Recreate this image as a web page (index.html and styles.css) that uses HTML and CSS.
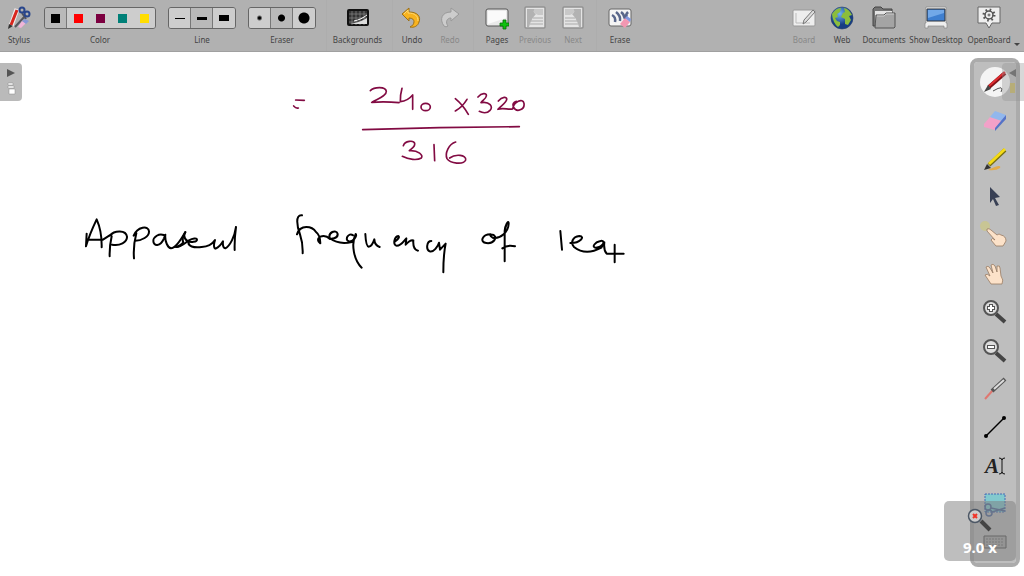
FILE: index.html
```html
<!DOCTYPE html>
<html lang="en">
<head>
<meta charset="utf-8">
<title>OpenBoard</title>
<link rel="stylesheet" href="styles.css">
</head>
<body>
<header class="toolbar">
  <button class="tool tool-stylus"><svg class="icon" viewBox="0 0 24 24"><path d="M4 20 10 3" stroke="#eee" stroke-width="5"/><path d="M4 19 10 4" stroke="#d8261e" stroke-width="3"/><path d="M1 23l1-5 4 2z" fill="#333"/><path d="M8 21 19 9M15 7l4 6" stroke="#55565e" stroke-width="2"/><g fill="none" stroke="#29468c" stroke-width="2"><circle cx="15" cy="4" r="2.5"/><circle cx="20" cy="8" r="2.5"/></g><path d="m11 21 4-6 4 2-5 5z" fill="#f0b4d8"/><path d="m15 15 3-2 4 2-3 3z" fill="#8799d6"/></svg><span>Stylus</span></button>
  <div class="tool tool-color" role="radiogroup" aria-labelledby="color-label">
    <div class="picker">
      <input type="radio" name="color" class="cell swatch black divided" aria-label="Black" checked>
      <input type="radio" name="color" class="cell swatch red" aria-label="Red">
      <input type="radio" name="color" class="cell swatch purple" aria-label="Purple">
      <input type="radio" name="color" class="cell swatch teal" aria-label="Teal">
      <input type="radio" name="color" class="cell swatch yellow" aria-label="Yellow">
    </div>
    <span id="color-label">Color</span>
  </div>
  <div class="tool tool-size" role="radiogroup" aria-labelledby="line-label">
    <div class="picker">
      <input type="radio" name="line" class="cell line-thin divided" aria-label="Thin line">
      <input type="radio" name="line" class="cell line-medium divided" aria-label="Medium line" checked>
      <input type="radio" name="line" class="cell line-thick" aria-label="Thick line">
    </div>
    <span id="line-label">Line</span>
  </div>
  <div class="tool tool-size" role="radiogroup" aria-labelledby="eraser-label">
    <div class="picker">
      <input type="radio" name="eraser" class="cell dot-small divided" aria-label="Small eraser">
      <input type="radio" name="eraser" class="cell dot-medium divided" aria-label="Medium eraser" checked>
      <input type="radio" name="eraser" class="cell dot-large" aria-label="Large eraser">
    </div>
    <span id="eraser-label">Eraser</span>
  </div>
  <div class="group">
    <button class="tool tool-backgrounds"><svg class="icon" viewBox="0 0 24 24"><rect x="2" y="4" width="20" height="15" rx="1" fill="#333" stroke="#111" stroke-width="2"/><path d="M3 8h18M3 12h18M3 16h18M6 5v14M10 5v14M14 5v14M18 5v14" stroke="#888" stroke-width=".7"/><path d="M4 18c7-1 12-3 17-6v6z" fill="#ddd"/><path d="M8 15c5-1 9-3 13-6" fill="none" stroke="#fff"/></svg><span>Backgrounds</span></button>
  </div>
  <div class="group">
    <button class="tool"><svg class="icon" viewBox="0 0 24 24"><path d="m2 8 7-6v4c9 0 12 5 10 10-1 4-5 6-9 5 5-2 6-9-1-9v3z" fill="#f8b31e" stroke="#9c7018" stroke-linejoin="round"/><path d="M4 8l4-4v3c7 0 10 3 10 8" fill="none" stroke="#ffd873"/></svg><span>Undo</span></button>
    <button class="tool" disabled><svg class="icon" viewBox="0 0 24 24"><path d="m21 8-8-6v4C4 6 1 13 6 20c1 1 3 1 4 0-3-4-1-8 3-8v3z" fill="#ccc" stroke="#999" stroke-linejoin="round"/></svg><span>Redo</span></button>
  </div>
  <div class="group group-pages">
    <button class="tool"><svg class="icon" viewBox="0 0 24 24"><rect x="1" y="3" width="22" height="17" rx="2" fill="#e9e9e9" stroke="#555"/><path d="M3 5h18v7L3 18z" fill="#fafafa"/><path d="M18 14h3v3h3v3h-3v3h-3v-3h-3v-3h3z" fill="#10c010" stroke="#067006" stroke-width=".8"/></svg><span>Pages</span></button>
    <button class="tool" disabled><svg class="icon" viewBox="0 0 24 24"><rect x="2" y="1" width="20" height="21" rx="1" fill="#e4e4e4" stroke="#929292" stroke-width="1.5"/><path d="M4 3h8q-3 3 1 5-5 5-7 13H4z" fill="#b2b2b2"/><path d="M12 3h8v6h-5l-2-1q-4-2-1-5z" fill="#c8c8c8"/><path d="M10 12h10M8 15h12M7 18h13" stroke="#aaa"/></svg><span>Previous</span></button>
    <button class="tool" disabled><svg class="icon" viewBox="0 0 24 24"><rect x="2" y="1" width="20" height="21" rx="1" fill="#e4e4e4" stroke="#929292" stroke-width="1.5"/><path d="M20 3h-8q3 3-1 5 5 5 7 13h2z" fill="#b2b2b2"/><path d="M12 3H4v6h5l2-1q4-2 1-5z" fill="#c8c8c8"/><path d="M14 12H4M16 15H4M17 18H4" stroke="#aaa"/></svg><span>Next</span></button>
  </div>
  <div class="group">
    <button class="tool tool-erase"><svg class="icon" viewBox="0 0 24 24"><rect x="1" y="3" width="22" height="17" rx="2" fill="#f4f4f4" stroke="#666"/><path d="m4 9q4 2 3 7M8 6q5 4 4 9M13 6q3 2 4 7M20 6q-3 3-1 5" fill="none" stroke="#59668a" stroke-width="2.5"/><path d="m12 18 5-6 5 4-5 6z" fill="#f297b2"/><path d="m17 12 2-2 4 3-1 3z" fill="#8198df"/></svg><span>Erase</span></button>
  </div>
  <nav class="modes" aria-label="Modes">
    <button class="tool" disabled><svg class="icon" viewBox="0 0 24 24"><rect x="1" y="4" width="22" height="16" rx="1" fill="#eee" stroke="#999"/><path d="M4 7v10h14" fill="none" stroke="#bbb"/><path d="m11 18 1-4 9-10 2 2-9 10z" fill="#ddd" stroke="#777"/></svg><span>Board</span></button>
    <button class="tool"><svg class="icon" viewBox="0 0 24 24"><defs><radialGradient id="sea" cx=".4" cy=".3"><stop stop-color="#70b5f5"/><stop offset="1" stop-color="#173d83"/></radialGradient></defs><circle cx="12" cy="12" r="11" fill="url(#sea)" stroke="#253e68" stroke-width=".6"/><path d="M2 8q4-6 9-6l-1 4-3 2 1 3-3 1 2 3 3 1v3l-2 2q-5-4-6-13zm12-6q5 1 8 7l-3 1 2 4-3 5-3-1v-5l-4-2 2-4 2-1z" fill="#8bbd3c"/></svg><span>Web</span></button>
    <button class="tool tool-documents"><svg class="icon" viewBox="0 0 24 24"><path d="M1 20V3l2-2h6l2 2h9v17z" fill="#747474" stroke="#444"/><path d="M3 5h17v13H3z" fill="#e4e4e4"/><path d="M3 22 4 9h8l2-2h9v14l-1 1z" fill="#a4a4a4" stroke="#555"/><path d="M5 10h7l2-2h8" stroke="#ccc" fill="none"/></svg><span>Documents</span></button>
    <button class="tool tool-desktop"><svg class="icon" viewBox="0 0 24 24"><path d="M2 1h20v16h1v5h-3v-2H4v2H1v-5h1z" fill="#eee" stroke="#888" stroke-width=".7"/><path d="M3 3h18v12H3z" fill="#3f7fd0" stroke="#30343a"/><path d="M4 4h16v3L4 12z" fill="#72a8e8"/></svg><span>Show Desktop</span></button>
    <button class="tool tool-openboard"><svg class="icon" viewBox="0 0 24 24"><path d="M1 1h22v16h-8l-3 5-3-5H1z" fill="#eee" stroke="#666"/><g fill="none" stroke="#555"><circle cx="12" cy="9" r="5" stroke-width="3" stroke-dasharray="1.5 2.427"/><circle cx="12" cy="9" r="4" stroke-width="1.5"/><circle cx="12" cy="9" r="1"/></g></svg><span>OpenBoard</span></button>
    <button class="more" aria-label="More"><svg viewBox="0 0 8 5"><path d="M1 1h6L4 4z" fill="#444"/></svg></button>
  </nav>
</header>
<main class="board">
  <svg class="ink" viewBox="0 52 1024 524" preserveAspectRatio="xMinYMin meet" role="img" aria-label="= 240 × 320 / 316. Apparent frequency of lea">
    <g class="ink-red" transform="translate(280 70) scale(.33333)">
      <path d="M47 90l26 1M41 108q7 8 14 6"/>
      <path d="M271 62C283 50 317 49 319 64 320 78 291 87 275 97q40-3 82 1M366 55q-6 22-5 40 22-2 37-20v43"/>
      <ellipse cx="437" cy="111" rx="14" ry="11"/>
      <path d="M526 86q23 19 39 47M561 88q-14 23-35 35"/>
      <path d="M594 81c11-13 27-13 25-3-1 8-12 14-16 20 26-5 38 13 27 23-9 10-23 8-32 3M655 93c11-14 27-14 25-4-2 11-19 19-26 29 15-6 31 2 44-1 3-22 31-34 34-17 3 20-23 28-31 12-5-10 0-16 8-18"/>
      <path d="M248 179l230-6 240-3"/>
      <path d="M370 227c5-15 31-17 34-7 2 11-11 17-16 22 27-2 43 14 36 22-13 8-37 5-57-5M462 224l2 48M527 216c-21 6-33 34-26 50 9 15 50 19 56 4 3-16-31-19-48-6"/>
    </g>
    <g class="ink-black" transform="translate(70 200) scale(.33333)">
      <path d="M50 101l-2 38C56 111 70 79 80 58q16 36 15 84M50 119h49l28-18M125 109q-7 31-6 60M119 107c15-17 49-17 52 3 1 17-22 29-45 24"/>
      <path d="M199 100q-10 38-7 75M191 107c11-27 45-32 46-13 1 16-22 28-41 28M281 105c-14-6-31 6-31 18 0 16 21 18 32-8l4-11c-2 21 8 40 17 41 14 0 30-26 43-49-9 16 1 24 8 29M320 141c14 0 27-14 37-20 10-6 24-8 24-2 0 7-19 8-25 6-4 14 15 19 39 16 19-1 31-7 40-21q-7 23 2 26 13-6 22-22-2 19 7 21c14-7 28-35 32-64q-5 35-4 69"/>
      <path d="M346 97q-12 20-6 30-8 12-26 14"/>
    </g>
    <g class="ink-black" transform="translate(280 200) scale(.33333)">
      <path d="M66 46C45 43 51 80 60 103q9 26 8 57M51 103C61 72 96 78 108 96q13 10 13 34-14-10 0-20 16-6 29 7c-8-20 19-31 23-15 1 15-21 15-23 13q25 20 66 11M219 106c-13-11-27 15-12 18 13 2 25-16 20-22-15 30-5 79 18 101M256 102q2 37 10 38 10-1 17-22 1 18 16 23"/>
      <path d="M346 124q15-12 9-16c-13 2-17 28-5 29 14 0 22-15 29-22l-2 19q14-16 23-13-2 28 14 31M454 123c-14 0-17 26-5 31 12 4 25-15 28-26l3 21 17-18q-7 33-7 86"/>
    </g>
    <g class="ink-black" transform="translate(460 200) scale(.33333)">
      <path d="M92 103c-26 0-34 24-13 26 21 3 34-15 22-24-12-4-14 1-3 8 22 5 47-17 48-42 0-16-12 9-12 21v92M127 145q16-12 38-6"/>
      <path d="M301 93l5 56M331 129c29 1 46-20 27-21-21 2-27 21-16 33 30 24 60 14 82 2 10-15 8-24-5-19-13 3-25 16-13 19 14 1 21-7 27-16-2 17 1 27 7 34h51M464 134v53"/>
    </g>
  </svg>
  <button class="tab tab-left" aria-label="Show pages"><svg viewBox="0 0 22 38"><path d="M7 6l8 4-8 4z" fill="#555"/><path d="M8 20h5v2H8zM8 23h6v2H8zM9 26h6v5H9z" fill="#fff" stroke="#888" stroke-width=".5"/></svg></button>
  <aside class="palette" aria-label="Tools">
    <button aria-label="Pen" class="active"><svg viewBox="0 0 30 30"><path d="M13 24q12-7 8 1" fill="none" stroke="#555"/><path d="m9 20 16-14" stroke="#801016" stroke-width="4"/><path d="m9 19 16-14" stroke="#e02c30" stroke-width="2"/><path d="M4 25l4-7 3 4z" fill="#444"/></svg></button>
    <button aria-label="Eraser"><svg viewBox="0 0 30 30"><path d="m4 18 6-7 12 4-7 9-11-3z" fill="#f2a1c8"/><path d="m10 11 5-6 11 4-4 6z" fill="#91b7ed"/><path d="m26 9-11 13v3l11-12z" fill="#5573c7"/></svg></button>
    <button aria-label="Marker"><svg viewBox="0 0 30 30"><path d="M8 26q14-7 12-2-4 3-12 2" fill="#e3ab4b"/><path d="m9 21 16-15" stroke="#756d13" stroke-width="4"/><path d="m9 20 16-15" stroke="#f5db16" stroke-width="3"/><path d="m4 26 3-6 4 4z" fill="#333"/></svg></button>
    <button aria-label="Select"><svg viewBox="0 0 30 30"><path d="m10 5 10 10-5 1 4 7-3 1-3-7-3 4z" fill="#384054"/></svg></button>
    <button aria-label="Interact"><svg viewBox="0 0 30 30"><circle cx="5" cy="5" r="5" class="spark"/><path d="M7 8q2-1 4 1l6 5q2-2 4 0 5 1 5 6l-3 5h-7l-5-6q1-3 4 0l-8-9z" fill="#fce2c9" stroke="#987b63" stroke-width=".8"/></svg></button>
    <button aria-label="Scroll page"><svg viewBox="0 0 30 30"><path d="M11 25 5 16q2-2 5 1L6 8q2-2 4 1l3 5-2-8q2-2 4 1l2 6V7q3-1 3 2l1 8q3 4 1 8z" fill="#fce2c9" stroke="#987b63" stroke-width=".8"/></svg></button>
    <button aria-label="Zoom in"><svg viewBox="0 0 30 30"><path d="m16 17 9 8" stroke="#444" stroke-width="4"/><circle cx="11" cy="11" r="7" fill="#ddd" stroke="#555" stroke-width="2"/><path d="M11 7v8M7 11h8" stroke="#555" stroke-width="4"/><path d="M11 8v6M8 11h6" stroke="#fff" stroke-width="2"/></svg></button>
    <button aria-label="Zoom out"><svg viewBox="0 0 30 30"><path d="m16 17 9 8" stroke="#444" stroke-width="4"/><circle cx="11" cy="11" r="7" fill="#ddd" stroke="#555" stroke-width="2"/><path d="M7 11h8" stroke="#555" stroke-width="4"/><path d="M8 11h6" stroke="#fff" stroke-width="2"/></svg></button>
    <button aria-label="Laser pointer"><svg viewBox="0 0 30 30"><path d="m5 25 8-9" stroke="#df7770" stroke-width="2"/><path d="m12 17 13-12" stroke="#555" stroke-width="4"/><path d="m14 15 10-9" stroke="#ddd" stroke-width="2"/></svg></button>
    <button aria-label="Draw line"><svg viewBox="0 0 30 30"><path d="M6 23 24 5" stroke="#000" stroke-width="1.5"/><circle cx="6" cy="23" r="2" fill="#000"/><circle cx="24" cy="5" r="2" fill="#000"/></svg></button>
    <button aria-label="Write text" class="write"><span>A</span><svg class="caret" viewBox="0 0 6 18"><path d="M0 1q3 0 3 2 0-2 3-2M3 2v14M0 17q3 0 3-2 0 2 3 2" fill="none" stroke="#111"/></svg></button>
    <button aria-label="Capture"><svg viewBox="0 0 30 30"><path d="M5 5h20v18H5z" fill="#82c9ce" stroke="#456ab6" stroke-dasharray="2 1"/><g fill="none" stroke="#506999" stroke-width="1.500"><circle cx="8" cy="18" r="3"/><circle cx="9" cy="24" r="3"/><path d="m11 19 14 3M12 23l13-4"/></g></svg></button>
    <button aria-label="Keyboard"><svg viewBox="0 0 30 30"><path d="M4 8h22v12H4z" fill="#aaa" stroke="#555"/><path d="M6 11h18M6 14h18M6 17h18" stroke="#777" stroke-dasharray="2 1"/></svg></button>
  </aside>
  <button class="tab tab-right" aria-label="Show library"><svg viewBox="0 0 22 38"><path d="M14 6 7 10l7 4z" fill="#555"/><path d="M8 20h5v10H8z" fill="#b5a75b"/></svg></button>
  <div class="zoom" role="status">
    <svg viewBox="0 0 26 26"><path d="m14 14 9 9" stroke="#444" stroke-width="4"/><circle cx="8" cy="9" r="6.500" fill="#ccc" stroke="#4d5866" stroke-width="1.500"/><path d="m6 7 4 4m0-4-4 4" stroke="#f03428" stroke-width="2"/></svg>
    <span>9.0 x</span>
  </div>
</main>
</body>
</html>
```

FILE: styles.css
```css
* { box-sizing: border-box; }

body {
  display: flex;
  flex-direction: column;
  min-height: 100vh;
  margin: 0;
  background: #fff;
  font-family: "Noto Sans", sans-serif;
}

button {
  padding: 0;
  border: 0;
  background: none;
  color: inherit;
  font: inherit;
}

.toolbar {
  display: flex;
  height: 52px;
  border-bottom: 1px solid #a0a0a0;
  background: #b1b1b1;
  color: #444;
  font-size: 8px;
  line-height: 12px;
}

.tool {
  display: flex;
  flex: none;
  flex-direction: column;
  align-items: center;
  gap: 4px;
  width: 38px;
  padding-top: 6px;
  white-space: nowrap;
}

.tool:disabled { color: #888; }
.icon { width: 24px; height: 24px; fill: none; }
.tool-color { width: 124px; }
.tool-size { width: 80px; }
.tool-backgrounds { width: 61px; }
.tool-erase { width: 46px; }
.tool-documents { width: 46px; }
.tool-desktop { width: 58px; }
.tool-openboard { width: 48px; }

.group {
  display: flex;
  margin-left: 4px;
  border-left: 1px solid #adadad;
}

.group-pages { padding-left: 4px; }
.modes { display: flex; margin-left: auto; }

.more {
  align-self: flex-end;
  width: 11px;
  padding-bottom: 4px;
}

.more svg { display: block; width: 8px; height: 5px; }

.picker {
  display: flex;
  height: 22px;
  margin: 1px 0;
  overflow: hidden;
  border: 1px solid #666;
  border-radius: 3px;
}

.cell {
  width: 22px;
  height: 20px;
  margin: 0;
  appearance: none;
  background-color: #cdcdcd;
  background-position: center;
  background-repeat: no-repeat;
}

.cell:checked { background-color: #b9b9b9; }
.divided { border-right: 1px solid #777; }
.swatch { background-size: 9px 9px; }
.black { background-image: linear-gradient(#000, #000); }
.red { background-image: linear-gradient(#f00, #f00); }
.purple { background-image: linear-gradient(#7c0040, #7c0040); }
.teal { background-image: linear-gradient(#008078, #008078); }
.yellow { background-image: linear-gradient(#fd0, #fd0); }
.line-thin, .line-medium, .line-thick { background-image: linear-gradient(#000, #000); }
.line-thin { background-size: 10px 1px; }
.line-medium { background-size: 10px 3px; }
.line-thick { background-size: 10px 6px; }
.dot-small { background-image: radial-gradient(circle, #000 1px, transparent 3px); }
.dot-medium { background-image: radial-gradient(circle, #000 3px, transparent 4px); }
.dot-large { background-image: radial-gradient(circle, #000 5px, transparent 6px); }

.board {
  position: relative;
  flex: 1;
  overflow: hidden;
}

.ink {
  display: block;
  width: 100%;
  fill: none;
  stroke-linecap: round;
  stroke-linejoin: round;
}

.ink-red { stroke: #820b43; stroke-width: 5px; }
.ink-black { stroke: #000; stroke-width: 6px; }

.tab {
  position: absolute;
  top: 11px;
  width: 22px;
  height: 38px;
  background: #bababa;
}

.tab-left { left: 0; border-radius: 0 4px 4px 0; }
.tab-right {
  right: 0;
  width: 22px;
  border-radius: 4px 0 0 4px;
  background: rgba(145, 145, 145, 0.5);
  opacity: 0.7;
}

.palette {
  position: absolute;
  top: 6px;
  right: 4px;
  bottom: 9px;
  display: grid;
  grid-auto-rows: 1fr;
  width: 50px;
  padding: 1px;
  border: 4px solid rgba(150, 150, 150, 0.8);
  border-radius: 8px;
  background: rgba(183, 183, 183, 0.9);
  background-clip: padding-box;
}

.palette button {
  display: flex;
  align-items: center;
  justify-content: center;
}

.palette svg { width: 30px; height: 30px; fill: none; }
.palette .active svg { border-radius: 50%; background: #f4f4f4; }
.spark { fill: #cfca78; opacity: 0.6; }

.write {
  color: #222;
}

.write span { font: italic bold 21px "Liberation Serif", serif; }
.palette .caret { width: 6px; height: 18px; }

.zoom {
  position: absolute;
  right: 8px;
  bottom: 15px;
  display: flex;
  flex-direction: column;
  align-items: center;
  gap: 4px;
  width: 72px;
  height: 60px;
  padding-top: 6px;
  border-radius: 5px;
  background: rgba(125, 125, 125, 0.5);
  color: #fff;
  font: bold 15px/20px "Noto Sans", sans-serif;
}

.zoom svg { width: 26px; height: 26px; fill: none; }
```
